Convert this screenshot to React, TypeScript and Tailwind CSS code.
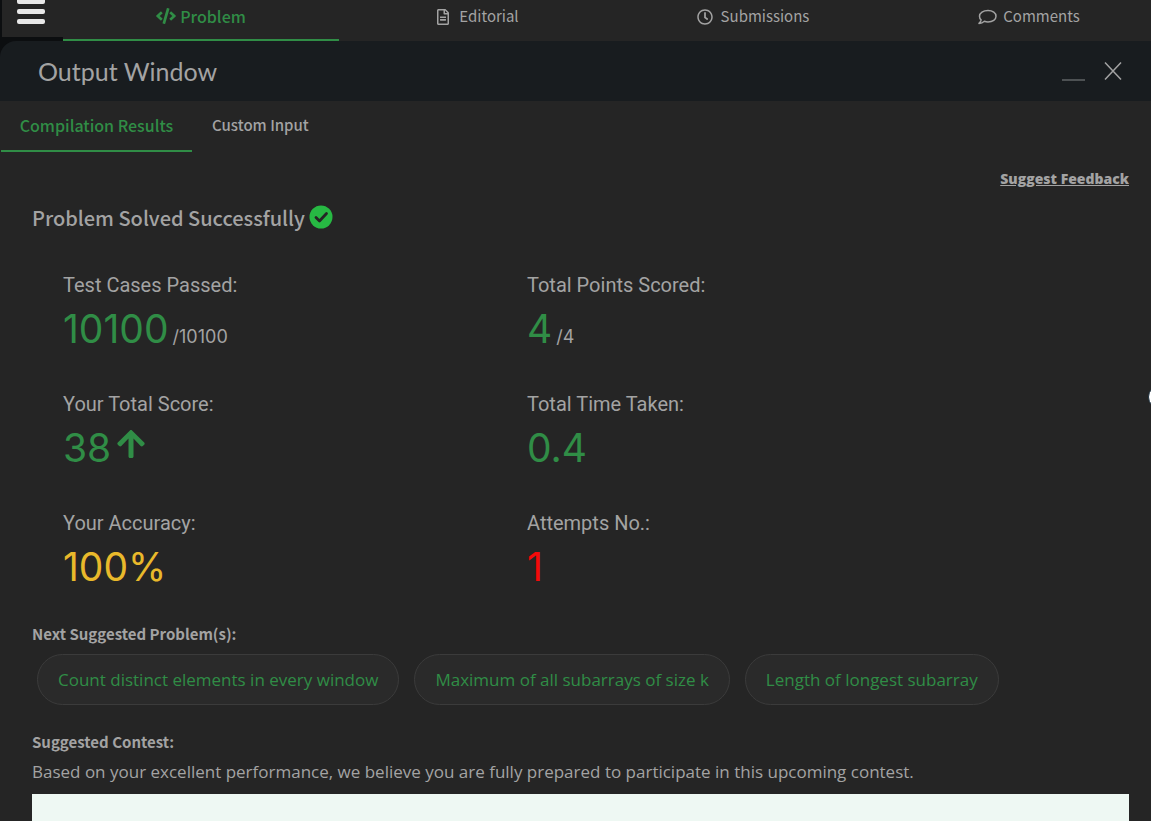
import type { ReactNode } from "react";
import { FaArrowUp, FaCode, FaRegClock, FaRegFileAlt } from "react-icons/fa";

type Stat = {
  label: string;
  value: string;
  total?: string;
  color: string;
  up?: boolean;
};

const stats: Stat[] = [
  { label: "Test Cases Passed:", value: "10100", total: "/10100", color: "text-[#308d46]" },
  { label: "Total Points Scored:", value: "4", total: "/4", color: "text-[#308d46]" },
  { label: "Your Total Score:", value: "38", color: "text-[#308d46]", up: true },
  { label: "Total Time Taken:", value: "0.4", color: "text-[#308d46]" },
  { label: "Your Accuracy:", value: "100%", color: "text-[#e9b92b]" },
  { label: "Attempts No.:", value: "1", color: "text-[#f50a0a]" },
];

const suggested = [
  "Count distinct elements in every window",
  "Maximum of all subarrays of size k",
  "Length of longest subarray",
];

function NavTab({ icon, label, active }: { icon: ReactNode; label: string; active?: boolean }) {
  return (
    <a
      href="#"
      className={`flex h-[41px] items-center justify-center border-b-2 ${
        active
          ? "border-[#308d46] pb-2 text-base font-medium text-[#308d46]"
          : "border-transparent pb-1.5 text-[15px]"
      }`}
    >
      {icon}
      {label}
    </a>
  );
}

function CommentIcon() {
  return (
    <svg className="mr-1.5 h-4 w-[19px]" viewBox="0 0 19 16" fill="none" stroke="currentColor" strokeWidth="1.5">
      <path
        d="M10 1.5c4.7 0 8 2.4 8 5.7s-3.3 5.7-8 5.7c-1.3 0-2.5-.2-3.6-.6C5 13.6 3 14.4 1 14.4c1.2-1 2-2.2 2.1-3.5C1.8 9.9 1.5 8.6 1.5 7.2c0-3.3 3.8-5.7 8.5-5.7Z"
        strokeLinejoin="round"
      />
    </svg>
  );
}

function StatItem({ stat }: { stat: Stat }) {
  return (
    <div className="h-[119px]">
      <div className="font-['Roboto',sans-serif] text-xl leading-7">{stat.label}</div>
      <div className="flex items-baseline font-['Inter',sans-serif]">
        <span className={`text-[39px] leading-[60px] ${stat.color}`}>{stat.value}</span>
        {stat.up && <FaArrowUp className="mt-2.5 ml-1 size-8 self-start text-[#308d46]" />}
        {stat.total && <span className="ml-1 text-lg">{stat.total}</span>}
      </div>
    </div>
  );
}

export default function App() {
  return (
    <div className="relative flex h-screen flex-col overflow-hidden bg-[#252525] font-['Noto_Sans_CJK_SC',sans-serif] text-[#a3a3a3]">
      <header className="flex bg-[#0c0e10]">
        <div className="ml-0.5 h-[37px] w-[61px] shrink-0 bg-[#252525]">
          <button type="button" aria-label="Menu" className="ml-[15px] flex h-6 w-7 flex-col justify-between">
            <span className="h-1 w-full rounded-b-xs bg-[#e8e8e8]" />
            <span className="h-[5px] w-full rounded-xs bg-[#e8e8e8]" />
            <span className="h-[5px] w-full rounded-xs bg-[#e8e8e8]" />
          </button>
        </div>
        <nav className="-mr-4 grid flex-1 grid-cols-4 bg-[#252525]">
          <NavTab active icon={<FaCode className="mr-1 size-5" />} label="Problem" />
          <NavTab icon={<FaRegFileAlt className="mr-2 size-4" />} label="Editorial" />
          <NavTab icon={<FaRegClock className="mr-2 size-4" />} label="Submissions" />
          <NavTab icon={<CommentIcon />} label="Comments" />
        </nav>
      </header>

      <div className="bg-[#0c0e10]">
        <div className="flex h-[60px] items-center justify-between rounded-tl-2xl bg-[#181c1f] pr-7 pl-[38px]">
          <h1 className="font-['Lato',sans-serif] text-[25px] leading-10">Output Window</h1>
          <div className="flex items-center gap-[18px]">
            <button type="button" aria-label="Minimize" className="flex h-5 w-[23px] items-end">
              <span className="h-0.5 w-full bg-[#4d5153]" />
            </button>
            <button type="button" aria-label="Close">
              <svg className="size-5" viewBox="0 0 20 20" fill="none" stroke="currentColor" strokeWidth="1.5">
                <path d="M2 1.5 18 18.5M18 1.5 2 18.5" />
              </svg>
            </button>
          </div>
        </div>
      </div>

      <div className="flex font-medium">
        <button
          type="button"
          className="ml-px h-[51px] w-[191px] border-b-2 border-[#308d46] pb-0.5 text-base text-[#308d46]"
        >
          Compilation Results
        </button>
        <button type="button" className="h-[51px] border-b-2 border-transparent px-5 text-[15px]">
          Custom Input
        </button>
      </div>

      <main className="flex flex-1 flex-col pr-[22px] pl-8">
        <a
          href="#"
          className="mt-[15px] self-end font-['Open_Sans',sans-serif] text-sm leading-6 font-extrabold underline"
        >
          Suggest Feedback
        </a>
        <h2 className="mt-[11px] flex h-8 items-center text-xl font-medium">
          Problem Solved Successfully
          <svg className="mb-0.5 ml-1 size-6" viewBox="0 0 24 24">
            <circle cx="12" cy="12" r="11.5" fill="#27b943" />
            <path
              d="M7 12.5 10.5 16 17.5 8.5"
              fill="none"
              stroke="#252525"
              strokeWidth="2.8"
              strokeLinecap="round"
              strokeLinejoin="round"
            />
          </svg>
        </h2>

        <div className="mt-[37px] ml-[31px] grid grid-cols-[464px_1fr]">
          {stats.map((stat) => (
            <StatItem key={stat.label} stat={stat} />
          ))}
        </div>

        <h3 className="-mt-1.5 text-[15px] leading-6 font-bold">Next Suggested Problem(s):</h3>
        <div className="mt-2 ml-[5px] flex gap-[15px]">
          {suggested.map((name) => (
            <a
              key={name}
              href="#"
              className="flex h-[51px] items-center rounded-full border border-[#3b3b3b] bg-[#2a2a2a] px-5 font-['Open_Sans',sans-serif] text-[17px] text-[#308d46]"
            >
              {name}
            </a>
          ))}
        </div>

        <h3 className="mt-[25px] text-[15px] leading-6 font-bold">Suggested Contest:</h3>
        <p className="mt-1.5 font-['Open_Sans',sans-serif] text-[17px] leading-6">
          Based on your excellent performance, we believe you are fully prepared to participate in this upcoming contest.
        </p>
        <div className="mt-2.5 flex-1 bg-[#eef8f3]" />
      </main>

      <button
        type="button"
        aria-label="Open side panel"
        className="absolute top-[385px] -right-[21px] size-6 rounded-full border border-[#1d3140] bg-white"
      />
    </div>
  );
}
